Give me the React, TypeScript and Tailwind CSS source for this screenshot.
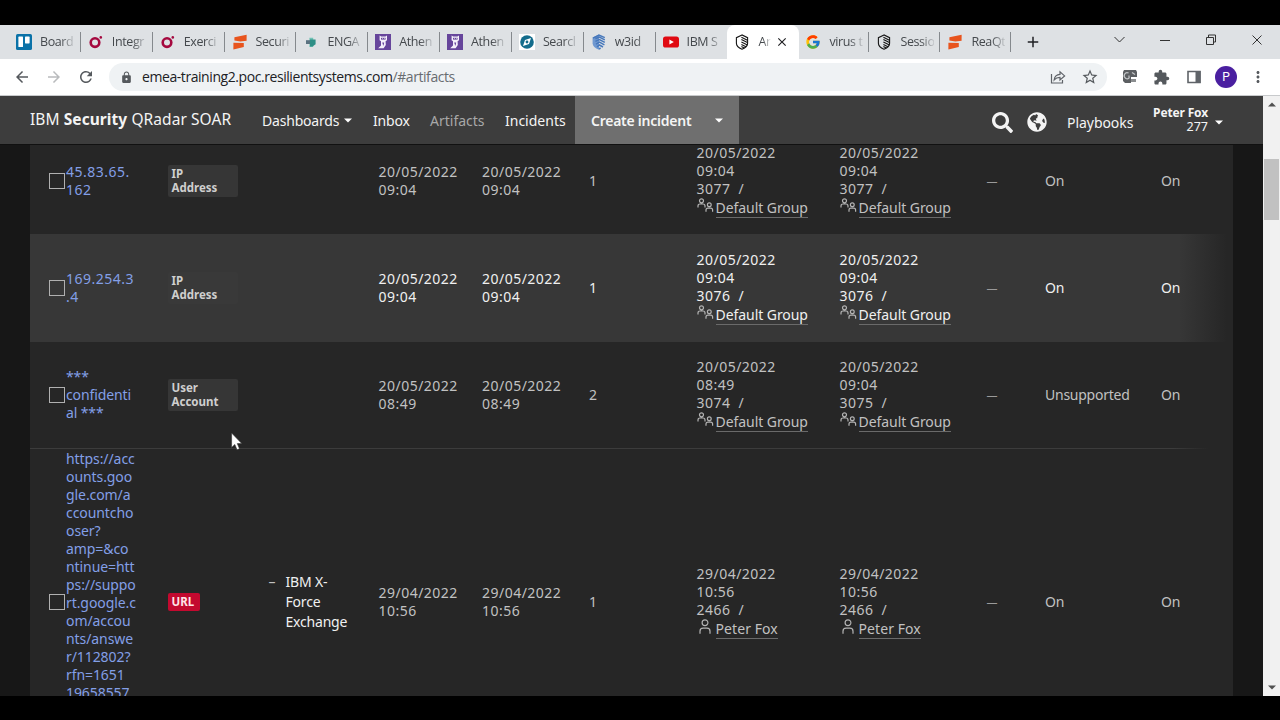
import { FC, ReactNode } from "react";
import { FaSearch, FaGlobeAmericas } from "react-icons/fa";
import { FcGoogle } from "react-icons/fc";
import {
	MdLock,
	MdExtension,
	MdArrowBack,
	MdArrowForward,
	MdRefresh,
	MdStarBorder,
	MdMoreVert,
	MdAdd,
	MdClose,
} from "react-icons/md";

const TrelloIcon: FC = () => (
	<svg viewBox="0 0 16 16" className="size-4">
		<rect width="16" height="16" rx="1.6" fill="#0a72a8" />
		<rect x="2.4" y="2.6" width="4.6" height="10.4" rx="0.6" fill="#fff" />
		<rect x="9" y="2.6" width="4.6" height="6.8" rx="0.6" fill="#fff" />
	</svg>
);

const RingIcon: FC = () => (
	<svg viewBox="0 0 16 16" className="size-4">
		<circle cx="7" cy="8.6" r="4.3" fill="none" stroke="#a5093f" strokeWidth="2.6" />
		<circle cx="12.8" cy="3.4" r="1.3" fill="#a5093f" />
	</svg>
);

const ReaqtaIcon: FC = () => (
	<svg viewBox="0 0 16 16" className="size-4">
		<path d="M2.4 3.2 14.6.8v6L8.4 7.4 2.4 6.6z" fill="#e8541d" />
		<path d="M1.4 8.8l10.4.2v4L1.4 15.4z" fill="#e8541d" />
	</svg>
);

const EngageIcon: FC = () => (
	<svg viewBox="0 0 16 16" className="size-4">
		<path d="M6.4 3.8h3.8v3.4H6.4zM6.4 9.6h3.8V13H6.4z" fill="#6fc2b4" />
		<path d="M3 6.2h4.2v3.8H3z" fill="#5a7280" />
		<path d="M7 5.4h5.6v4.8L9.4 12.4H7z" fill="#2e8f86" />
	</svg>
);

const AthenaIcon: FC = () => (
	<svg viewBox="0 0 16 16" className="size-4">
		<rect width="16" height="16" fill="#66459b" />
		<path
			d="M4.6 1.6 6.2 2.4h4.2l1.6-.8v4.6l-1.4 1 .2 3.8-2.2 3.2H3.2L6 11.4V7.2l-1.4-1z"
			fill="#f4effa"
		/>
		<path d="M6 3.800h4.600v1.800H6z" fill="#66459b" />
		<path d="M7.2 4.200h.7v.8h-.7zM9 4.200h.7v.8H9z" fill="#fff" />
		<path d="M7.2 8.4h2L8.4 12z" fill="#66459b" />
	</svg>
);

const CompassIcon: FC = () => (
	<svg viewBox="0 0 16 16" className="size-4">
		<rect width="16" height="16" fill="#fff" />
		<circle cx="8" cy="8" r="6.8" fill="#136c8c" />
		<path d="m12 4-2 6-6 2 2-6z" fill="#fff" />
		<circle cx="8" cy="8" r="1.4" fill="#136c8c" />
	</svg>
);

const W3Icon: FC = () => (
	<svg viewBox="0 0 16 16" className="size-4">
		<path d="M8 .4 1.6 3.6v5.8c0 2.6 2.4 4.600 6.400 6.400z" fill="#6f98d0" />
		<path
			d="M2 4.200 8 1l5.800 2.600M4.400 4.800l4-1.800 5.400 2.800M4.400 7.400l4-1.800 5.400 2.800M5 10.200l3.400-2 5 2.600M6 12.800l2.400-1.800 3.600 2M8 15l1.600-1"
			fill="none"
			stroke="#4778bb"
			strokeWidth="1.5"
		/>
	</svg>
);

const YoutubeIcon: FC = () => (
	<svg viewBox="0 0 16 16" className="size-4">
		<rect y="2.4" width="16" height="11.2" rx="2.6" fill="#e00a12" />
		<path d="m6.4 5.4 4.4 2.6-4.4 2.6z" fill="#fff" />
	</svg>
);

const ShieldIcon: FC = () => (
	<svg viewBox="0 0 16 16" className="size-4" fill="none" stroke="#161616">
		<path
			d="M8 .9 2.4 3.7v5.5c0 2.9 2.3 4.7 5.600 6 3.300-1.300 5.600-3.100 5.600-6V3.700z"
			strokeWidth="1.1"
		/>
		<path
			d="m7.400 3.200 6 3M7.400 5.600l6 3M7.400 8l6 3M7.400 10.400l4.600 2.300M7.400 12.600l2.800 1.500"
			strokeWidth="1.1"
		/>
	</svg>
);

const Caret: FC = () => (
	<svg viewBox="0 0 8 5" className="h-[5px] w-2 shrink-0" fill="#fff">
		<path d="M0 .5h8L4 4.5z" />
	</svg>
);

type Tab = { icon: ReactNode; label: string; active?: boolean; line?: boolean };

const tabs: Tab[] = [
	{ icon: <TrelloIcon />, label: "Board", line: true },
	{ icon: <RingIcon />, label: "Integr", line: true },
	{ icon: <RingIcon />, label: "Exerci", line: true },
	{ icon: <ReaqtaIcon />, label: "Securi", line: true },
	{ icon: <EngageIcon />, label: "ENGA", line: true },
	{ icon: <AthenaIcon />, label: "Athen", line: true },
	{ icon: <AthenaIcon />, label: "Athen", line: true },
	{ icon: <CompassIcon />, label: "Searcl", line: true },
	{ icon: <W3Icon />, label: "w3id", line: true },
	{ icon: <YoutubeIcon />, label: "IBM S" },
	{ icon: <ShieldIcon />, label: "Ar", active: true },
	{ icon: <FcGoogle className="size-4" />, label: "virus t", line: true },
	{ icon: <ShieldIcon />, label: "Sessio", line: true },
	{ icon: <ReaqtaIcon />, label: "ReaQt", line: true },
];

const TabStrip: FC = () => (
	<div className="flex h-[34px] bg-[#dee1e4] pl-[9px] text-[12.5px] tracking-[-0.4px] text-[#45494d]">
		{tabs.map((tab, i) =>
			tab.active ? (
				<div
					key={i}
					className="-mr-px flex h-full w-[72px] shrink-0 items-center rounded-t-lg bg-white pl-[7px]"
				>
					{tab.icon}
					<span className="ml-2 w-[13px] overflow-hidden whitespace-nowrap [mask-image:linear-gradient(to_right,#000_40%,transparent)]">
						{tab.label}
					</span>
					<MdClose className="ml-1 size-3.5 text-[#202124]" />
				</div>
			) : (
				<div
					key={i}
					className={`flex h-full shrink-0 items-center pl-[7px] ${i < 10 ? "w-[71.85px]" : "w-[71px]"}`}
				>
					{tab.icon}
					<span className="ml-2 w-[34px] overflow-hidden whitespace-nowrap [mask-image:linear-gradient(to_right,#000_60%,rgba(0,0,0,0.15))]">
						{tab.label}
					</span>
					{tab.line && <span className="ml-auto h-5 w-px bg-[#85898d]" />}
				</div>
			)
		)}
		<MdAdd className="mt-2 ml-[13px] size-[18px] shrink-0 text-[#202124]" />
		<svg
			viewBox="0 0 168 34"
			className="ml-auto h-[34px] w-[168px] shrink-0"
			fill="none"
			stroke="#333"
		>
			<path d="m2.500 12 5 5 5-5M48 15.500h10M94.500 12.500h7v7h-7zM96.500 12v-2h7v7h-2M140.500 10.500l9 9m0-9-9 9" />
		</svg>
	</div>
);

const Toolbar: FC = () => (
	<div className="flex h-[37px] items-center border-b border-[#c8cacc] bg-white pl-[13px] text-[#55595d]">
		<MdArrowBack className="size-[18px]" />
		<MdArrowForward className="ml-[14px] size-[18px] text-[#b9bbbd]" />
		<MdRefresh className="ml-[14px] size-[18px]" />
		<div className="ml-[14px] flex h-7 w-[998px] items-center rounded-full bg-[#eff2f4] pr-2 pl-[11px]">
			<MdLock className="size-[13px]" />
			<span className="ml-[9px] text-sm tracking-[-0.43px] text-[#202124]">
				emea-training2.poc.resilientsystems.com<span className="text-[#686c70]">/#artifacts</span>
			</span>
			<svg
				viewBox="0 0 16 16"
				className="ml-auto size-4"
				fill="none"
				stroke="#5f6368"
				strokeWidth="1.2"
			>
				<path d="M1.500 5v9h11v-3" />
				<path d="M4.200 10.800C4.600 7.400 6.600 5.600 10 5.400V2.800l4.600 4.100-4.600 4V8.300c-2.600 0-4.400.8-5.800 2.500z" />
			</svg>
			<MdStarBorder className="ml-[15px] size-[18px]" />
		</div>
		<svg viewBox="0 0 16 16" className="ml-[15px] size-4">
			<path d="M2 1h12l1 2v5H9v6H3l-2-2V3z" fill="#5c5f62" />
			<path
				d="M6.600 4a3 3 0 1 0 1 4.500M7 6.500V9M10 3.500l3 2"
				fill="none"
				stroke="#c4c7c9"
				strokeWidth="1.2"
			/>
			<path d="M9 10h5v3H9z" fill="#8b8e90" />
		</svg>
		<MdExtension className="ml-[15px] size-[17px]" />
		<svg viewBox="0 0 16 16" className="ml-4 size-4">
			<path d="M2 2.500h12v11H2z" fill="none" stroke="#5f6368" strokeWidth="1.600" />
			<path d="M9.500 2h5v12h-5z" fill="#5f6368" />
		</svg>
		<div className="ml-[13px] flex size-[22px] items-center justify-center rounded-full bg-[#4a1fa0] font-['Roboto',sans-serif] text-xs text-white">
			P
		</div>
		<MdMoreVert className="ml-3 size-[18px]" />
	</div>
);

const Navbar: FC = () => (
	<nav className="flex h-[49px] shrink-0 items-center border-b border-[#111] bg-[#3d3d3d] pl-[30px] text-[14px] text-[#f4f4f4]">
		<div className="w-[232px] text-[15.5px] tracking-[0.07px] whitespace-nowrap">
			IBM <b className="font-bold">Security</b> QRadar SOAR
		</div>
		<div className="flex w-[111px] items-center gap-[5px]">
			<span className="tracking-[-0.2px]">Dashboards</span>
			<Caret />
		</div>
		<div className="w-[57px] tracking-[-0.2px]">Inbox</div>
		<div className="w-[75px] text-[#a8a8a8]">Artifacts</div>
		<div className="w-[70px]">Incidents</div>
		<div className="flex h-full w-[164px] items-center justify-between bg-[#6f6f6f] px-4 font-semibold">
			<span className="tracking-[-0.25px]">Create incident</span>
			<Caret />
		</div>
		<FaSearch className="mt-1 ml-[253px] size-[21px] shrink-0" />
		<FaGlobeAmericas className="mt-1 ml-[14px] size-5 shrink-0" />
		<div className="ml-5 w-[86px] pt-1 tracking-[-0.05px]">Playbooks</div>
		<div className="flex w-[55px] flex-col text-right leading-[14px]">
			<span className="text-[12px] font-bold tracking-[-0.15px] whitespace-nowrap">Peter Fox</span>
			<span className="text-[12.5px]">277</span>
		</div>
		<div className="ml-[7px] pt-[5px]">
			<Caret />
		</div>
	</nav>
);

type Incident = { date: string; time: string; id: string; owner: string; group?: boolean };

type Artifact = {
	value: string[];
	type: string[];
	source?: string[];
	created: [string, string];
	last: [string, string];
	count: number;
	first: Incident;
	latest: Incident;
	lookup: string;
	relate: string;
	rowClass: string;
	badgeClass: string;
	valueClass: string;
};

const artifacts: Artifact[] = [
	{
		value: ["45.83.65.", "162"],
		type: ["IP", "Address"],
		created: ["20/05/2022", "09:04"],
		last: ["20/05/2022", "09:04"],
		count: 1,
		first: { date: "20/05/2022", time: "09:04", id: "3077", owner: "Default Group", group: true },
		latest: { date: "20/05/2022", time: "09:04", id: "3077", owner: "Default Group", group: true },
		lookup: "On",
		relate: "On",
		rowClass: "h-[107px] text-[#c1c1c1]",
		badgeClass: "w-[70px] bg-[#363636]",
		valueClass: "tracking-[0.48px]",
	},
	{
		value: ["169.254.3", ".4"],
		type: ["IP", "Address"],
		created: ["20/05/2022", "09:04"],
		last: ["20/05/2022", "09:04"],
		count: 1,
		first: { date: "20/05/2022", time: "09:04", id: "3076", owner: "Default Group", group: true },
		latest: { date: "20/05/2022", time: "09:04", id: "3076", owner: "Default Group", group: true },
		lookup: "On",
		relate: "On",
		rowClass:
			"h-[108px] bg-[linear-gradient(to_right,#373737_95.5%,#262626_99.5%)] text-[#f0f0f0]",
		badgeClass: "w-[70px] bg-[#393939]",
		valueClass: "tracking-[0.48px]",
	},
	{
		value: ["***", "confidenti", "al ***"],
		type: ["User", "Account"],
		created: ["20/05/2022", "08:49"],
		last: ["20/05/2022", "08:49"],
		count: 2,
		first: { date: "20/05/2022", time: "08:49", id: "3074", owner: "Default Group", group: true },
		latest: { date: "20/05/2022", time: "09:04", id: "3075", owner: "Default Group", group: true },
		lookup: "Unsupported",
		relate: "On",
		rowClass: "h-[106px] text-[#c1c1c1]",
		badgeClass: "w-[70px] bg-[#363636]",
		valueClass: "tracking-[-0.12px]",
	},
	{
		value: [
			"https://acc",
			"ounts.goo",
			"gle.com/a",
			"ccountcho",
			"oser?",
			"amp=&co",
			"ntinue=htt",
			"ps://suppo",
			"rt.google.c",
			"om/accou",
			"nts/answe",
			"r/112802?",
			"rfn=1651",
			"19658557",
		],
		type: ["URL"],
		source: ["IBM X-", "Force", "Exchange"],
		created: ["29/04/2022", "10:56"],
		last: ["29/04/2022", "10:56"],
		count: 1,
		first: { date: "29/04/2022", time: "10:56", id: "2466", owner: "Peter Fox" },
		latest: { date: "29/04/2022", time: "10:56", id: "2466", owner: "Peter Fox" },
		lookup: "On",
		relate: "On",
		rowClass: "h-[306px] text-[#c1c1c1]",
		badgeClass: "w-8 bg-[#c3092f] text-[#ffe3e6]",
		valueClass: "self-start pt-px tracking-[-0.08px]",
	},
];

const Lines: FC<{ lines: string[] }> = ({ lines }) => (
	<>
		{lines.map((line, i) => (
			<div key={i}>{line}</div>
		))}
	</>
);

const OwnerIcon: FC<{ group?: boolean }> = ({ group }) => (
	<svg
		viewBox="0 0 19 20"
		className="h-5 w-[19px] shrink-0 text-[#b4b4b4]"
		fill="none"
		stroke="currentColor"
		strokeWidth="1.2"
	>
		{group ? (
			<path d="M4.500.8a2 2 0 1 1 0 4 2 2 0 0 1 0-4M1 9.600V8c0-1.200.9-2 2-2h3c1.100 0 2 .8 2 2v1.600M12.300 4.800a1.900 1.900 0 1 1 0 3.800 1.900 1.900 0 0 1 0-3.800M9 13.800v-1.700c0-1.100.8-1.900 1.900-1.900h2.800c1.100 0 1.900.8 1.900 1.900v1.700" />
		) : (
			<path d="M8 .8a2.900 2.900 0 1 1 0 5.800A2.900 2.900 0 0 1 8 .8M3 14.800v-2.600c0-1.800 1.300-3 3-3h4c1.700 0 3 1.200 3 3v2.600" />
		)}
	</svg>
);

const IncidentCell: FC<{ incident: Incident }> = ({ incident }) => (
	<div>
		<div className="tracking-[0.48px]">{incident.date}</div>
		<div className="tracking-[0.48px]">{incident.time}</div>
		<div className="tracking-[0.48px]">
			{incident.id}
			<span className="ml-2">/</span>
		</div>
		<div className="flex h-5 items-start">
			<OwnerIcon group={incident.group} />
			<span
				className={`border-b border-[#6a6a6a] leading-[19px] whitespace-nowrap ${
					incident.group ? "tracking-[-0.06px]" : "tracking-[0.08px]"
				}`}
			>
				{incident.owner}
			</span>
		</div>
	</div>
);

const ArtifactRow: FC<{ artifact: Artifact }> = ({ artifact }) => (
	<div
		className={`grid shrink-0 grid-cols-[17px_101.5px_101px_110px_103.5px_107px_107.500px_143px_147px_58.5px_116px_1fr] items-center pl-[19px] ${artifact.rowClass}`}
	>
		<div className="size-4 border border-[#b0b0b0]" />
		<div className={`whitespace-nowrap text-[#839fe6] ${artifact.valueClass}`}>
			<Lines lines={artifact.value} />
		</div>
		<div
			className={`rounded-xs px-1 py-0.5 text-[11.5px] leading-[14px] font-bold text-[#cfcfcf] ${artifact.badgeClass}`}
		>
			<Lines lines={artifact.type} />
		</div>
		<div className="text-[#f0f0f0]">
			{artifact.source && (
				<div className="-mt-px flex leading-5 tracking-[-0.2px]">
					<span className="w-[17px] text-[#c1c1c1]">–</span>
					<div>
						<Lines lines={artifact.source} />
					</div>
				</div>
			)}
		</div>
		<div className="tracking-[0.48px]">
			<Lines lines={artifact.created} />
		</div>
		<div className="tracking-[0.48px]">
			<Lines lines={artifact.last} />
		</div>
		<div>{artifact.count}</div>
		<IncidentCell incident={artifact.first} />
		<IncidentCell incident={artifact.latest} />
		<div className="text-[11px] text-[#9a9a9a]">—</div>
		<div className="tracking-[-0.25px]">{artifact.lookup}</div>
		<div className="tracking-[-0.25px]">{artifact.relate}</div>
	</div>
);

const Scrollbar: FC = () => (
	<div className="flex w-[17px] flex-col items-center bg-[#f1f1f1] py-1.5">
		<svg viewBox="0 0 8 5" className="h-[5px] w-2" fill="#505050">
			<path d="M0 4.5h8L4 .5z" />
		</svg>
		<div className="mt-[52px] h-[61px] w-[15px] bg-[#c1c1c1]" />
		<svg viewBox="0 0 8 5" className="mt-auto h-[5px] w-2" fill="#505050">
			<path d="M0 .5h8L4 4.5z" />
		</svg>
	</div>
);

export default function App() {
	return (
		<div className="relative h-[720px] w-[1280px] overflow-hidden bg-black pt-[25px] font-['Open_Sans',sans-serif]">
			<TabStrip />
			<Toolbar />
			<div className="flex h-[600px] font-['Noto_Sans',sans-serif]">
				<div className="flex w-[1263px] flex-col bg-[#171717]">
					<Navbar />
					<div className="ml-[30px] flex w-[1203px] flex-1 flex-col overflow-hidden bg-[#262626] text-[14px] leading-[18px]">
						<div className="-mt-[18px] flex shrink-0 flex-col">
							{artifacts.slice(0, 3).map((artifact) => (
								<ArtifactRow key={artifact.first.id} artifact={artifact} />
							))}
							<div className="h-px bg-[linear-gradient(to_right,#3c3c3c_95%,#262626_98%)]" />
							<ArtifactRow artifact={artifacts[3]} />
						</div>
					</div>
				</div>
				<Scrollbar />
			</div>
			<svg viewBox="0 0 12 19" className="absolute top-[432px] left-[231px] h-[19px] w-3">
				<path
					d="M.6 1v14.500l3.200-3 2.200 5.300 2.500-1-2.200-5.200h4.500z"
					fill="#fff"
					stroke="#333"
					strokeWidth=".6"
				/>
			</svg>
		</div>
	);
}
